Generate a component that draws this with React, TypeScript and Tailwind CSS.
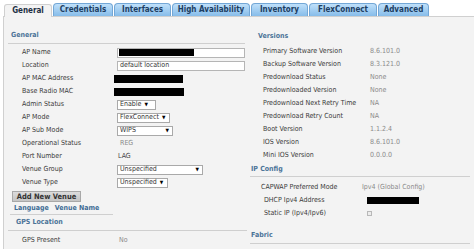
import React from "react";

const tabs = [
  { name: "General", w: "w-[48px]", active: true },
  { name: "Credentials", w: "w-[60px]" },
  { name: "Interfaces", w: "w-[57px]" },
  { name: "High Availability", w: "w-[78px]" },
  { name: "Inventory", w: "w-[57px]" },
  { name: "FlexConnect", w: "w-[68px]" },
  { name: "Advanced", w: "w-[51px]" },
];

const versions = [
  ["Primary Software Version", "8.6.101.0"],
  ["Backup Software Version", "8.3.121.0"],
  ["Predownload Status", "None"],
  ["Predownloaded Version", "None"],
  ["Predownload Next Retry Time", "NA"],
  ["Predownload Retry Count", "NA"],
  ["Boot Version", "1.1.2.4"],
  ["IOS Version", "8.6.101.0"],
  ["Mini IOS Version", "0.0.0.0"],
];

const Row: React.FC<{ label: string; children?: React.ReactNode }> = ({
  label,
  children,
}) => (
  <div className="flex items-center h-[13px] pl-[18px]">
    <span className="w-[95px] shrink-0 text-[#3a3a3a]">{label}</span>
    {children}
  </div>
);

const Select: React.FC<{ text: string; w: string; spread?: boolean }> = ({
  text,
  w,
  spread,
}) => (
  <div
    className={`${w} h-[10px] bg-white border border-[#a9a9a9] flex items-center pl-[2px] pr-[3px] text-[#333] ${
      spread ? "justify-between" : "gap-[3px]"
    }`}
  >
    <span className="leading-none">{text}</span>
    <span className="text-[5px] leading-none text-black">▼</span>
  </div>
);

const Header: React.FC<{ text: string; className?: string }> = ({
  text,
  className,
}) => (
  <div
    className={`flex items-center border-b border-[#cfcfcf] font-bold text-[#4b7498] ${className}`}
  >
    {text}
  </div>
);

export default function App() {
  return (
    <div
      className="w-[474px] h-[249px] bg-white overflow-hidden text-[7px] leading-none"
      style={{ fontFamily: "'DejaVu Sans Condensed', 'Liberation Sans', sans-serif" }}
    >
      {/* Tabs */}
      <div className="flex items-end h-[16px] pl-[4px] gap-[1px]">
        {tabs.map((t) =>
          t.active ? (
            <div
              key={t.name}
              className={`${t.w} h-[13px] bg-[#f3f3f3] border border-b-0 border-[#d0d0d0] rounded-t-[3px] flex items-center justify-center font-bold text-[8px] text-[#1c2f44] relative top-[1px]`}
            >
              {t.name}
            </div>
          ) : (
            <div
              key={t.name}
              className={`${t.w} h-[13px] bg-gradient-to-b from-[#bfe0fa] to-[#86bce9] border border-b-0 border-[#73a7d6] rounded-t-[4px] flex items-center justify-center font-bold text-[8px] text-[#1d3e63]`}
            >
              {t.name}
            </div>
          )
        )}
      </div>

      {/* Panel */}
      <div className="ml-[3px] h-[233px] border-l border-t border-[#d0d0d0] bg-[#f3f3f3] flex">
        {/* Left column */}
        <div className="w-[243px] shrink-0 pt-[11px]">
          <Header text="General" className="ml-[4px] w-[237px] h-[16px] pl-[3px]" />
          <div className="mt-[2px]">
            <Row label="AP Name">
              <div className="w-[128px] h-[10px] bg-white border border-[#b5b5b5] flex items-center pl-[1px]">
                <div className="w-[75px] h-[7px] bg-black" />
              </div>
            </Row>
            <Row label="Location">
              <div className="w-[128px] h-[10px] bg-white border border-[#b5b5b5] flex items-center pl-[2px] text-[#333]">
                default location
              </div>
            </Row>
            <Row label="AP MAC Address">
              <div className="w-[69px] h-[8px] bg-black -ml-[3px]" />
            </Row>
            <Row label="Base Radio MAC">
              <div className="w-[70px] h-[8px] bg-black -ml-[3px]" />
            </Row>
            <Row label="Admin Status">
              <Select text="Enable" w="w-[39px]" />
            </Row>
            <Row label="AP Mode">
              <Select text="FlexConnect" w="w-[53px]" />
            </Row>
            <Row label="AP Sub Mode">
              <Select text="WIPS" w="w-[56px]" spread />
            </Row>
            <Row label="Operational Status">
              <span className="text-[#8a8a8a] pl-[3px]">REG</span>
            </Row>
            <Row label="Port Number">
              <span className="text-[#444] pl-[1px]">LAG</span>
            </Row>
            <Row label="Venue Group">
              <Select text="Unspecified" w="w-[86px]" spread />
            </Row>
            <Row label="Venue Type">
              <Select text="Unspecified" w="w-[51px]" />
            </Row>
          </div>
          <div className="ml-[8px] mt-[2px] w-[69px] h-[11px] bg-gradient-to-b from-[#dcdcdc] to-[#c4c4c4] border border-[#a8a8a8] flex items-center justify-center font-bold text-[7.5px] text-[#333]">
            Add New Venue
          </div>
          <div className="ml-[6px] w-[103px] h-[13px] border-b border-[#cfcfcf] flex items-center gap-[6px] pl-[4px] font-bold text-[#3f6d95]">
            <span>Language</span>
            <span>Venue Name</span>
          </div>
          <Header text="GPS Location" className="ml-[4px] w-[239px] h-[16px] pl-[8px]" />
          <div className="mt-[3px]">
            <Row label="GPS Present">
              <span className="text-[#8a8a8a] pl-[2px]">No</span>
            </Row>
          </div>
        </div>

        {/* Right column */}
        <div className="flex-1 pt-[11px]">
          <div className="h-[16px] flex items-center pl-[11px] font-bold text-[#4b7498]">
            Versions
          </div>
          <div className="mt-[1px]">
            {versions.map(([l, v]) => (
              <div key={l} className="flex items-center h-[13px] pl-[16px]">
                <span className="w-[107px] shrink-0 text-[#3a3a3a]">{l}</span>
                <span className="text-[#8a8a8a]">{v}</span>
              </div>
            ))}
          </div>
          <Header text="IP Config" className="ml-[3px] w-[220px] h-[15px] pl-[1px]" />
          <div className="mt-[4px]">
            <div className="flex items-center h-[13px] pl-[14px]">
              <span className="w-[101px] shrink-0 text-[#3a3a3a]">CAPWAP Preferred Mode</span>
              <span className="text-[#8a8a8a]">Ipv4 (Global Config)</span>
            </div>
            <div className="flex items-center h-[13px] pl-[17px]">
              <span className="w-[103px] shrink-0 text-[#3a3a3a]">DHCP Ipv4 Address</span>
              <div className="w-[52px] h-[7px] bg-black" />
            </div>
            <div className="flex items-center h-[13px] pl-[17px]">
              <span className="w-[103px] shrink-0 text-[#3a3a3a]">Static IP (Ipv4/Ipv6)</span>
              <div className="w-[5px] h-[5px] border border-[#b8b8b8] bg-[#ececec]" />
            </div>
          </div>
          <Header text="Fabric" className="mt-[8px] ml-[3px] w-[220px] h-[16px] pl-[1px]" />
        </div>
      </div>
    </div>
  );
}
